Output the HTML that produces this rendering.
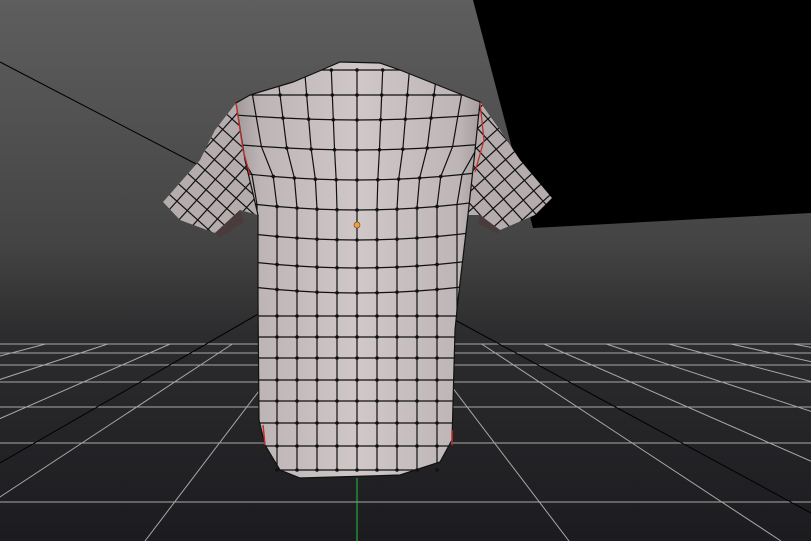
<!DOCTYPE html>
<html><head><meta charset="utf-8"><style>
html,body{margin:0;padding:0;background:#333;overflow:hidden}
svg{display:block}
</style></head><body>
<svg id="s" width="811" height="541" viewBox="0 0 811 541" xmlns="http://www.w3.org/2000/svg">
<defs>
<linearGradient id="bg" x1="0" y1="0" x2="0" y2="1">
<stop offset="0" stop-color="#5e5e5e"/>
<stop offset="0.45" stop-color="#444444"/>
<stop offset="0.62" stop-color="#2c2c2e"/>
<stop offset="1" stop-color="#1c1c20"/>
</linearGradient>
<linearGradient id="sh" x1="0" y1="0" x2="1" y2="0">
<stop offset="0" stop-color="#9a9294"/>
<stop offset="0.12" stop-color="#bdb5b6"/>
<stop offset="0.5" stop-color="#cfc7c8"/>
<stop offset="0.88" stop-color="#bdb5b6"/>
<stop offset="1" stop-color="#9a9294"/>
</linearGradient>
<clipPath id="body"><path id="bp" d="M258,215 L245,160 L236,103 L250,95 L293,82 L317,72 L340,62 L380,63 L400,70 L445,88 L480,102 L474,160 L468,215 L458,300 L455,330 L452,440 L440,462 L400,475 L300,478 L280,470 L265,445 L259,420 L258,300 Z"/></clipPath>
<clipPath id="ls"><path d="M236,103 L215,130 L200,160 L163,202 L180,220 L215,233 L240,210 L258,215 L245,160 Z"/></clipPath>
<clipPath id="rs"><path d="M480,102 L500,130 L520,160 L552,198 L535,215 L500,230 L480,215 L468,215 L474,160 Z"/></clipPath>
</defs>
<rect width="811" height="541" fill="url(#bg)"/>
<polygon points="473,0 811,0 811,213 533,228" fill="#000"/>
<g id="grid" stroke="#a8a8a8" stroke-width="1"></g>
<line x1="0" y1="62" x2="200" y2="166" stroke="#000" stroke-width="1"/>
<line x1="0" y1="463" x2="260" y2="313" stroke="#000" stroke-width="1"/>
<line x1="455" y1="320" x2="811" y2="513" stroke="#000" stroke-width="1"/>
<line x1="357" y1="478" x2="357" y2="541" stroke="#2bbf3a" stroke-width="1"/>
<g clip-path="url(#ls)"><rect x="150" y="90" width="120" height="150" fill="#b4acad"/><g id="lsg" stroke="#111" stroke-width="1.2"></g></g>
<g clip-path="url(#rs)"><rect x="460" y="90" width="110" height="150" fill="#b4acad"/><g id="rsg" stroke="#111" stroke-width="1.2"></g></g>
<polygon points="215,233 240,210 244,222 220,238" fill="#4a3c3c"/>
<polygon points="500,230 480,215 478,224 498,234" fill="#4a3c3c"/>
<g clip-path="url(#body)"><rect x="230" y="50" width="260" height="440" fill="url(#sh)"/><g id="bg2" stroke="#111" stroke-width="1.2"></g></g>
<use href="#bp" fill="none" stroke="#111" stroke-width="1.2"/>
<path d="M236,103 L243,150 L250,175" stroke="#c0302a" stroke-width="1.3" fill="none"/>
<path d="M480,103 L484,140 L475,172" stroke="#c0302a" stroke-width="1.3" fill="none"/>
<path d="M263,425 L265,445" stroke="#c0302a" stroke-width="1.5"/>
<path d="M452,430 L452,445" stroke="#c0302a" stroke-width="1.5"/>
<g id="dots" fill="#111"></g>
<circle cx="357" cy="225" r="3" fill="#e8a040" stroke="#704010" stroke-width="0.6"/>
</svg>
<script>
var NS="http://www.w3.org/2000/svg";
function el(p,t,a){var e=document.createElementNS(NS,t);for(var k in a)e.setAttribute(k,a[k]);p.appendChild(e);return e;}
var g=document.getElementById('grid');
[344,353,365,382,407,443,502].forEach(function(y){el(g,'line',{x1:0,y1:y,x2:811,y2:y});});
var vx=357,vy=262;
for(var k=-8;k<=8;k++){if(k==0)continue;var bx=357+212*k;var t=(344-vy)/(541-vy);
el(g,'line',{x1:vx+(bx-vx)*t,y1:344,x2:bx,y2:541});}
var bg=document.getElementById('bg2'),dots=document.getElementById('dots');
var rows=[70,95,120,150,180,210,240,268,293,316,337,358,380,401,423,446,470];
var cols=[];for(var c=-6;c<=6;c++)cols.push(c);
function px(c,y){var w=20+(y<200?(200-y)*0.04:0);return 357+c*w*(1+0.02*Math.abs(c)*(y<150?1:0));}
function py(c,r){return rows[r]+((r>=2&&r<9)?-Math.abs(c)*Math.abs(c)*0.22:0);}
for(var r=0;r<rows.length;r++){var d="";cols.forEach(function(c,i){d+=(i?"L":"M")+px(c,py(c,r))+","+py(c,r);});el(bg,'path',{d:d,fill:"none"});}
cols.forEach(function(c){var d="";for(var r=0;r<rows.length;r++){d+=(r?"L":"M")+px(c,py(c,r))+","+py(c,r);}el(bg,'path',{d:d,fill:"none"});});
for(var r=0;r<rows.length;r++)cols.forEach(function(c){var x=px(c,py(c,r)),y=py(c,r);
if(x>262&&x<452&&y>62+Math.abs(x-360)*0.25)el(dots,'circle',{cx:x,cy:y,r:1.8});});
function sleeve(id,ox,oy,ang){var p=document.getElementById(id);
var a=ang*Math.PI/180,ux=Math.cos(a),uy=Math.sin(a),vxx=-uy,vyy=ux;
for(var i=-8;i<=8;i++){var cx=ox+ux*i*14,cy=oy+uy*i*14;
el(p,'line',{x1:cx-vxx*120,y1:cy-vyy*120,x2:cx+vxx*120,y2:cy+vyy*120});
var dx=ox+vxx*i*14,dy=oy+vyy*i*14;
el(p,'line',{x1:dx-ux*120,y1:dy-uy*120,x2:dx+ux*120,y2:dy+uy*120});}}
sleeve('lsg',205,170,42);
sleeve('rsg',515,170,-42);
</script>
</body></html>
